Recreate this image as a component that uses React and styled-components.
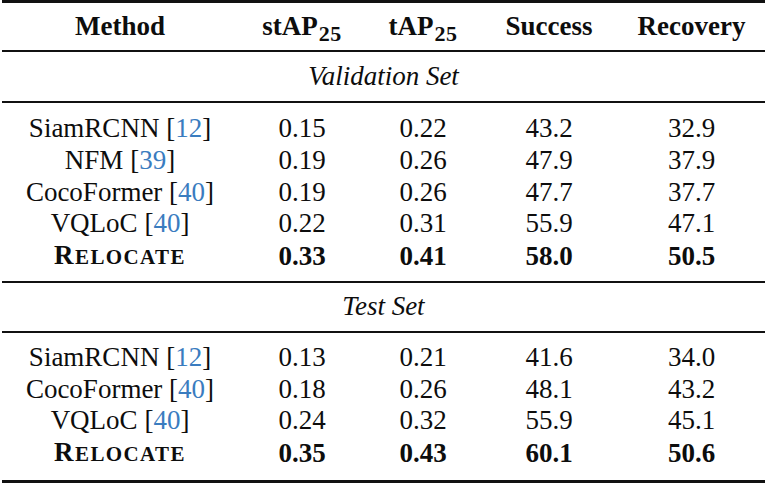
import React from "react";
import styled, { createGlobalStyle } from "styled-components";

const GlobalStyle = createGlobalStyle`
  html, body {
    margin: 0;
    padding: 0;
    background: #ffffff;
  }
  body {
    font-family: "Liberation Serif", "Times New Roman", serif;
    color: #0d0d0d;
  }
`;

const COLS = "236px 128px 114px 138px 147px";

const Table = styled.div`
  margin-left: 2px;
  width: 763px;
  border-top: 3px solid #111;
  border-bottom: 3px solid #111;
  font-size: 27px;
`;

const HeadRow = styled.div`
  display: grid;
  grid-template-columns: ${COLS};
  align-items: center;
  height: 47px;
  border-bottom: 2px solid #111;
  font-weight: 700;
`;

const Cell = styled.div`
  text-align: center;
  white-space: nowrap;
  font-weight: ${(p) => (p.$bold ? 700 : "inherit")};
`;

const Sub = styled.span`
  font-size: 22px;
  position: relative;
  top: 6px;
  margin-left: 1px;
  letter-spacing: 0.5px;
`;

const SectionRow = styled.div`
  display: flex;
  align-items: center;
  justify-content: center;
  height: ${(p) => p.$h}px;
  border-bottom: 2px solid #111;
  font-style: italic;
`;

const Block = styled.div`
  padding: ${(p) => p.$top}px 0 ${(p) => p.$bottom}px;
  border-bottom: ${(p) => (p.$last ? "none" : "2px solid #111")};
`;

const Row = styled.div`
  display: grid;
  grid-template-columns: ${COLS};
  align-items: center;
  height: 31.75px;
  line-height: 31.75px;
`;

const Cite = styled.span`
  color: #3a7cbf;
`;

const SmallCaps = styled.span`
  font-weight: 700;
  letter-spacing: 1.4px;
`;

const Initial = styled.span`
  font-size: 27px;
`;

const Rest = styled.span`
  font-size: 21px;
`;

const Relocate = () => (
  <SmallCaps>
    <Initial>R</Initial>
    <Rest>ELOCATE</Rest>
  </SmallCaps>
);

const validation = [
  { name: "SiamRCNN", cite: "12", v: ["0.15", "0.22", "43.2", "32.9"] },
  { name: "NFM", cite: "39", v: ["0.19", "0.26", "47.9", "37.9"] },
  { name: "CocoFormer", cite: "40", v: ["0.19", "0.26", "47.7", "37.7"] },
  { name: "VQLoC", cite: "40", v: ["0.22", "0.31", "55.9", "47.1"] },
  { ours: true, v: ["0.33", "0.41", "58.0", "50.5"] },
];

const test = [
  { name: "SiamRCNN", cite: "12", v: ["0.13", "0.21", "41.6", "34.0"] },
  { name: "CocoFormer", cite: "40", v: ["0.18", "0.26", "48.1", "43.2"] },
  { name: "VQLoC", cite: "40", v: ["0.24", "0.32", "55.9", "45.1"] },
  { ours: true, v: ["0.35", "0.43", "60.1", "50.6"] },
];

const DataRow = ({ row }) => (
  <Row>
    <Cell>
      {row.ours ? (
        <Relocate />
      ) : (
        <>
          {row.name} [<Cite>{row.cite}</Cite>]
        </>
      )}
    </Cell>
    {row.v.map((val, i) => (
      <Cell key={i} $bold={row.ours}>
        {val}
      </Cell>
    ))}
  </Row>
);

const App = () => (
  <>
    <GlobalStyle />
    <Table>
      <HeadRow>
        <Cell>Method</Cell>
        <Cell>
          stAP<Sub>25</Sub>
        </Cell>
        <Cell>
          tAP<Sub>25</Sub>
        </Cell>
        <Cell>Success</Cell>
        <Cell>Recovery</Cell>
      </HeadRow>
      <SectionRow $h={49}>Validation Set</SectionRow>
      <Block $top={10} $bottom={9}>
        {validation.map((r, i) => (
          <DataRow key={i} row={r} />
        ))}
      </Block>
      <SectionRow $h={48}>Test Set</SectionRow>
      <Block $top={9} $bottom={11} $last>
        {test.map((r, i) => (
          <DataRow key={i} row={r} />
        ))}
      </Block>
    </Table>
  </>
);

export default App;
